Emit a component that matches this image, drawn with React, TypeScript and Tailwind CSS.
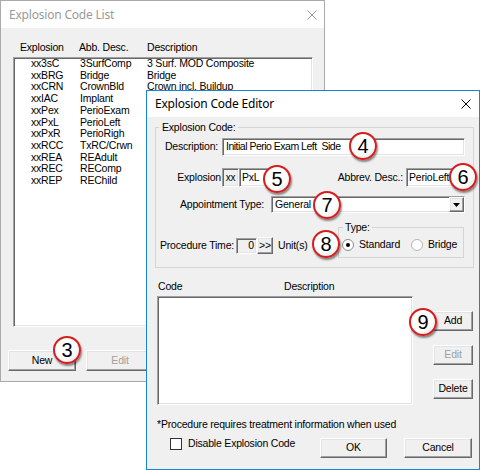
import React from "react";

const sunken =
  "border border-t-[#a0a0a0] border-l-[#a0a0a0] border-b-white border-r-white shadow-[inset_1px_1px_0_#696969,inset_-1px_-1px_0_#e3e3e3]";
const raised =
  "border border-t-white border-l-white border-b-[#696969] border-r-[#696969] shadow-[inset_-1px_-1px_0_#a0a0a0,inset_1px_1px_0_#e3e3e3] bg-[#f0f0f0]";

// only the first rows' descriptions show; the rest sit behind the editor window
const rows = [
  ["xx3sC", "3SurfComp", "3 Surf. MOD Composite"],
  ["xxBRG", "Bridge", "Bridge"],
  ["xxCRN", "CrownBld", "Crown incl. Buildup"],
  ["xxIAC", "Implant", ""],
  ["xxPex", "PerioExam", ""],
  ["xxPxL", "PerioLeft", ""],
  ["xxPxR", "PerioRigh", ""],
  ["xxRCC", "TxRC/Crwn", ""],
  ["xxREA", "REAdult", ""],
  ["xxREC", "REComp", ""],
  ["xxREP", "REChild", ""],
];

function CloseX({ color }: { color: string }) {
  return (
    <svg width="10" height="10" viewBox="0 0 10 10">
      <path d="M0.5 0.5 L9.5 9.5 M9.5 0.5 L0.5 9.5" stroke={color} strokeWidth="1" />
    </svg>
  );
}

function Callout({ n, className }: { n: string; className: string }) {
  return (
    <div
      className={`absolute w-[28px] h-[28px] rounded-full border-2 border-[#d81c1c] bg-[radial-gradient(circle_at_40%_35%,#ffffff_55%,#d6d6d6)] shadow-[1px_2px_2px_rgba(0,0,0,0.45)] flex items-center justify-center text-[20px] leading-none tracking-normal text-black ${className}`}
    >
      {n}
    </div>
  );
}

function Btn({
  children,
  className,
  disabled,
}: {
  children: React.ReactNode;
  className: string;
  disabled?: boolean;
}) {
  return (
    <div
      className={`${raised} flex items-center justify-center ${
        disabled ? "text-[#a0a0a0]" : "text-black"
      } ${className}`}
    >
      {children}
    </div>
  );
}

function CodeList() {
  return (
    <div className="absolute left-0 top-0 w-[325px] h-[382px] border border-[#aaaaaa] bg-[#f0f0f0] flex flex-col">
      <div className="h-[27px] bg-white flex items-center justify-between pl-[8px] pr-[7px] font-['Noto_Sans',sans-serif] text-[12px] tracking-[-0.2px] text-[#9a9a9a]">
        <span>Explosion Code List</span>
        <CloseX color="#9a9a9a" />
      </div>
      <div className="pt-[13px]">
        <div className="flex pl-[19px] leading-[13px]">
          <span className="w-[59px]">Explosion</span>
          <span className="w-[68px]">Abb. Desc.</span>
          <span>Description</span>
        </div>
        <div className={`ml-[12px] mt-[3px] w-[300px] h-[270px] bg-white ${sunken}`}>
          {rows.map((r) => (
            <div key={r[0]} className="flex pl-[17px] leading-[11.7px] whitespace-nowrap">
              <span className="w-[49px]">{r[0]}</span>
              <span className="w-[67px]">{r[1]}</span>
              {r[2] && <span>{r[2]}</span>}
            </div>
          ))}
        </div>
        <div className="flex ml-[7px] mt-[23px] gap-[10px]">
          <Btn className="w-[68px] h-[21px]">New</Btn>
          <Btn className="w-[68px] h-[21px]" disabled>
            Edit
          </Btn>
        </div>
      </div>
    </div>
  );
}

function Editor() {
  return (
    <div className="absolute left-[146px] top-[90px] w-[334px] h-[380px] border border-[#1883d7] bg-[#f0f0f0] flex flex-col whitespace-nowrap">
      <div className="h-[26px] bg-white flex items-center justify-between pl-[8px] pr-[8px] font-['Noto_Sans',sans-serif] text-[12px] tracking-[-0.2px] text-black">
        <span>Explosion Code Editor</span>
        <CloseX color="#000" />
      </div>

      <fieldset className="mt-[4px] ml-[8px] w-[319px] border border-[#d5d5d5]">
        <legend className="ml-[3px] px-[3px] leading-[13px]">Explosion Code:</legend>

        <div className="mt-[4px] flex items-center h-[18px]">
          <span className="w-[62px] text-right">Description:</span>
          <div className={`ml-[4px] w-[243px] h-[18px] bg-white pl-[3px] flex items-center tracking-[-0.5px] ${sunken}`}>
            Initial Perio Exam Left&nbsp; Side
          </div>
        </div>

        <div className="mt-[12px] flex items-center h-[19px]">
          <span className="w-[65px] text-right">Explosion</span>
          <div className={`ml-[1px] w-[17px] h-[19px] flex items-center justify-center text-[10px] ${sunken}`}>
            xx
          </div>
          <div className={`w-[30px] h-[19px] bg-white pl-[2px] flex items-center ${sunken}`}>PxL</div>
          <span className="w-[134px] text-right">Abbrev. Desc.:</span>
          <div className={`ml-[3px] w-[57px] h-[19px] bg-white pl-[2px] flex items-center ${sunken}`}>
            PerioLeft
          </div>
        </div>

        <div className="mt-[9px] flex items-center h-[17px]">
          <span className="w-[108px] text-right">Appointment Type:</span>
          <div className={`ml-[7px] w-[194px] h-[17px] bg-white pl-[3px] flex items-center ${sunken}`}>
            <span className="flex-1">General</span>
            <div className={`${raised} w-[15px] h-[15px] flex items-center justify-center`}>
              <svg width="7" height="4" viewBox="0 0 7 4">
                <path d="M0 0 H7 L3.5 4 Z" fill="#000" />
              </svg>
            </div>
          </div>
        </div>

        <div className="mt-[8px] mb-[9px] flex items-end">
          <div className="flex items-center mb-[4px]">
            <span className="w-[78px] text-right">Procedure Time:</span>
            <div className={`ml-[2px] w-[21px] h-[16px] pr-[2px] flex items-center justify-end ${sunken}`}>0</div>
            <Btn className="w-[16px] h-[17px]">&gt;&gt;</Btn>
            <span className="ml-[5px]">Unit(s)</span>
          </div>
          <fieldset className="ml-auto mr-[9px] w-[126px] border border-[#d5d5d5]">
            <legend className="ml-[4px] px-[2px] leading-[13px]">Type:</legend>
            <div className="flex items-center pt-[4px] pb-[6px] pl-[3px] leading-[13px]">
              <div className="w-[12px] h-[12px] rounded-full border border-[#8c8c8c] bg-white flex items-center justify-center">
                <div className="w-[4px] h-[4px] rounded-full bg-black" />
              </div>
              <span className="ml-[5px] w-[52px]">Standard</span>
              <div className="w-[12px] h-[12px] rounded-full border border-[#b5b5b5] bg-white" />
              <span className="ml-[5px]">Bridge</span>
            </div>
          </fieldset>
        </div>
      </fieldset>

      <div className="mt-[12px] flex pl-[11px] leading-[13px]">
        <span className="w-[126px]">Code</span>
        <span>Description</span>
      </div>

      <div className="mt-[3px] flex">
        <div className={`ml-[10px] w-[256px] h-[109px] bg-white ${sunken}`} />
        <div className="ml-[20px] pt-[15px] flex flex-col gap-[14px]">
          <Btn className="w-[40px] h-[20px]">Add</Btn>
          <Btn className="w-[40px] h-[20px]" disabled>
            Edit
          </Btn>
          <Btn className="w-[40px] h-[20px]">Delete</Btn>
        </div>
      </div>

      <div className="mt-[13px] pl-[10px] leading-[13px]">
        *Procedure requires treatment information when used
      </div>

      <div className="mt-[7px] flex items-start">
        <div className="ml-[23px] flex items-center h-[12px]">
          <div className="w-[12px] h-[12px] border border-[#333] bg-white" />
          <span className="ml-[6px]">Disable Explosion Code</span>
        </div>
        <div className="ml-auto mr-[7px] flex gap-[17px]">
          <Btn className="w-[67px] h-[20px]">OK</Btn>
          <Btn className="w-[68px] h-[20px]">Cancel</Btn>
        </div>
      </div>
    </div>
  );
}

export default function App() {
  return (
    <div className="relative w-[480px] h-[470px] overflow-hidden bg-white font-['Liberation_Sans',Arial,sans-serif] text-[10.5px] tracking-[-0.2px] text-black">
      <CodeList />
      <Editor />
      <Callout n="3" className="left-[53px] top-[336px]" />
      <Callout n="4" className="left-[349px] top-[132px]" />
      <Callout n="5" className="left-[263px] top-[165px]" />
      <Callout n="6" className="left-[449px] top-[163px]" />
      <Callout n="7" className="left-[313px] top-[191px]" />
      <Callout n="8" className="left-[312px] top-[230px]" />
      <Callout n="9" className="left-[409px] top-[308px]" />
    </div>
  );
}
